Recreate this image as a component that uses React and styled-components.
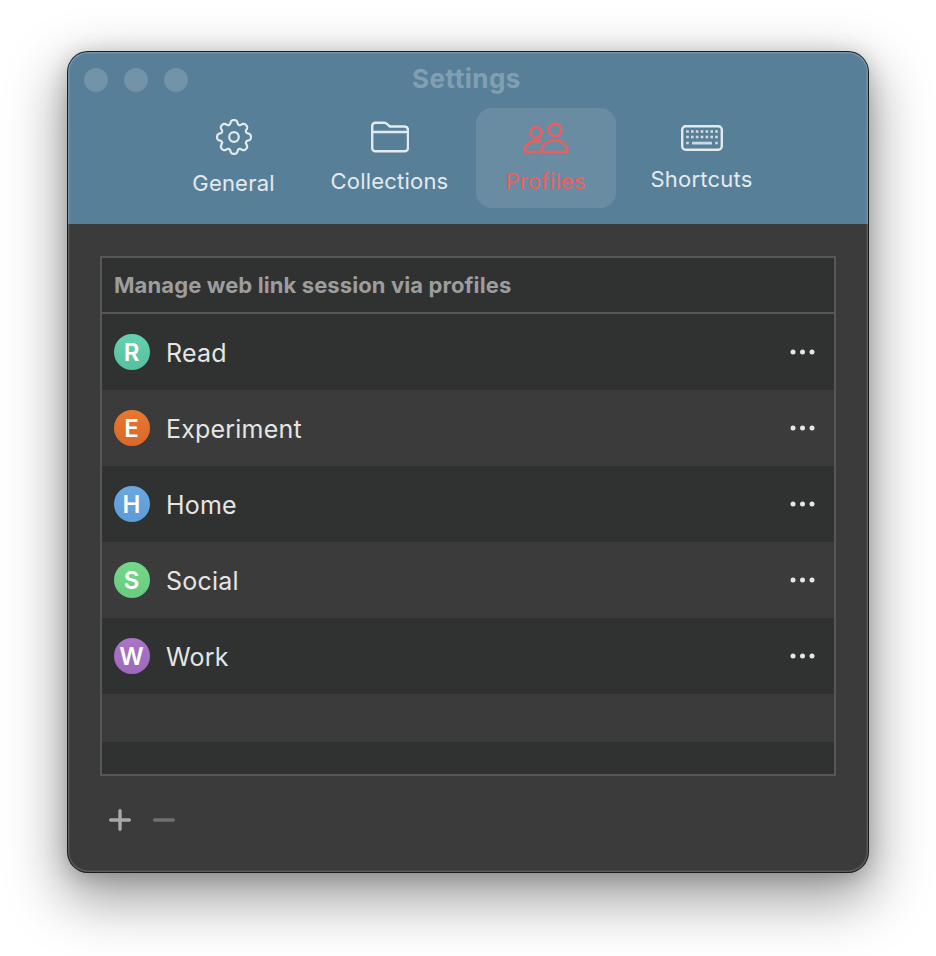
import React from "react";
import styled, { createGlobalStyle } from "styled-components";

const Global = createGlobalStyle`
  html, body { margin: 0; padding: 0; background: #ffffff; }
  body { font-family: Inter, "Liberation Sans", sans-serif; -webkit-font-smoothing: antialiased; }
`;

const Page = styled.div`
  width: 936px;
  height: 956px;
  padding: 52px 68px 84px;
  box-sizing: border-box;
  overflow: hidden;
`;

const Window = styled.div`
  width: 800px;
  height: 820px;
  border-radius: 20px;
  overflow: hidden;
  background: #3a3b3a;
  display: flex;
  flex-direction: column;
  box-shadow: 0 0 0 1px #1c1c1c, 0 22px 56px 6px rgba(0, 0, 0, 0.38), 0 4px 22px rgba(0, 0, 0, 0.22);
  position: relative;
  &::after {
    content: "";
    position: absolute;
    inset: 0;
    border-radius: 20px;
    box-shadow: inset 0 0 0 1.5px rgba(255, 255, 255, 0.16);
    pointer-events: none;
  }
`;

const Header = styled.header`
  height: 172px;
  background: #587f98;
  display: flex;
  flex-direction: column;
`;

const TitleBar = styled.div`
  height: 56px;
  padding: 0 16px;
  display: grid;
  grid-template-columns: 1fr auto 1fr;
  align-items: center;
`;

const Lights = styled.div`
  display: flex;
  gap: 16px;
`;

const Light = styled.span`
  width: 24px;
  height: 24px;
  border-radius: 50%;
  background: rgba(255, 255, 255, 0.16);
`;

const Title = styled.div`
  font-size: 26px;
  line-height: 54px;
  height: 56px;
  font-weight: 700;
  letter-spacing: 0.5px;
  margin-left: -3px;
  color: rgba(255, 255, 255, 0.27);
`;

const Tabs = styled.nav`
  display: flex;
  justify-content: center;
  gap: 16px;
`;

const Tab = styled.div`
  width: 140px;
  height: 100px;
  border-radius: 16px;
  display: flex;
  flex-direction: column;
  align-items: center;
  justify-content: center;
  gap: 14px;
  background: ${(p) => (p.$active ? "rgba(255,255,255,0.1)" : "transparent")};
  color: ${(p) => (p.$active ? "#ee5e5e" : "#e3eaee")};
`;

const TabIcon = styled.div`
  height: ${(p) => p.$h}px;
  display: flex;
  align-items: center;
  justify-content: center;
`;

const TabLabel = styled.div`
  font-size: 22px;
  line-height: 28px;
  font-weight: 400;
  letter-spacing: 0.2px;
  margin-left: -1px;
  white-space: nowrap;
`;

const Body = styled.main`
  flex: 1;
  padding: 32px 32px 0;
  display: flex;
  flex-direction: column;
`;

const Table = styled.section`
  height: 520px;
  box-sizing: border-box;
  border: 2px solid #565756;
  background: #303131;
  display: flex;
  flex-direction: column;
`;

const TableHead = styled.div`
  height: 54px;
  flex: none;
  border-bottom: 2px solid #565756;
  box-sizing: content-box;
  padding-left: 12px;
  display: flex;
  align-items: center;
  font-size: 22px;
  font-weight: 700;
  letter-spacing: 0.1px;
  color: #9c9d9c;
`;

const Row = styled.div`
  height: ${(p) => p.$h || 76}px;
  flex: none;
  box-sizing: border-box;
  padding: 0 18px 0 12px;
  display: flex;
  align-items: center;
  background: ${(p) => (p.$alt ? "#3a3b3a" : "#303131")};
`;

const Avatar = styled.div`
  width: 36px;
  height: 36px;
  border-radius: 50%;
  flex: none;
  box-sizing: border-box;
  padding-right: 1px;
  display: flex;
  align-items: center;
  justify-content: center;
  color: #fff;
  font-size: 24px;
  font-weight: 600;
  background: ${(p) => p.$color};
`;

const Name = styled.div`
  margin-left: 16px;
  flex: 1;
  font-size: 25px;
  line-height: 32px;
  padding-top: 2px;
  letter-spacing: 0.2px;
  font-weight: 400;
  color: #e4e5e4;
`;

const DotsWrap = styled.div`
  display: flex;
`;

const Footer = styled.div`
  display: flex;
  align-items: center;
  gap: 22px;
  padding: 33px 0 0 9px;
`;

const gearPath = (() => {
  const pts = [];
  const n = 240;
  for (let i = 0; i < n; i++) {
    const a = (i / n) * Math.PI * 2;
    const c = Math.cos(8 * a);
    const shape = Math.tanh(1.3 * (c + 0.35));
    const lo = Math.tanh(1.3 * -0.65);
    const hi = Math.tanh(1.3 * 1.35);
    const r = 13 + (3.9 * (shape - lo)) / (hi - lo);
    pts.push(`${(18 + r * Math.sin(a)).toFixed(2)} ${(18 - r * Math.cos(a)).toFixed(2)}`);
  }
  return `M${pts.join("L")}Z`;
})();

const Gear = () => (
  <svg width="36" height="36" viewBox="0 0 36 36" fill="none" stroke="currentColor" strokeWidth="2.200" strokeLinejoin="round">
    <path d={gearPath} />
    <circle cx="18" cy="18" r="4.800" />
  </svg>
);

const Folder = () => (
  <svg width="38" height="32" viewBox="0 0 38 32" fill="none" stroke="currentColor" strokeWidth="2.400" strokeLinejoin="round">
    <path d="M1.200 27V5a3.300 3.300 0 0 1 3.300-3.300h8.500c1.500 0 2.500.6 3.500 1.600L19 5.500h15a3.500 3.500 0 0 1 3 3.500v18a3.300 3.300 0 0 1-3.300 3.300H4.500A3.300 3.300 0 0 1 1.200 27z" />
    <path d="M1.200 11h35.600" />
  </svg>
);

const People = () => (
  <svg width="46" height="32" viewBox="0 0 46 32" fill="none" stroke="currentColor" strokeWidth="2.400">
    <circle cx="13" cy="11.500" r="5.400" />
    <circle cx="32" cy="9" r="6.200" />
    <path d="M15.500 31H3a1.700 1.700 0 0 1-1.700-2.200C3 23.500 7.500 20 13.500 20c1.200 0 2.400.2 3.500.5" strokeLinecap="round" />
    <path d="M19 31h24c1.400 0 2.100-1 1.700-2.200C42.800 23 37.800 19.500 31.500 19.500S20.200 23 18.300 28.800c-.4 1.200.3 2.200 1.700 2.200z" />
  </svg>
);

const Keyboard = () => (
  <svg width="42" height="28" viewBox="0 0 42 28" fill="none">
    <rect x="1.200" y="3.200" width="39.600" height="23.600" rx="3.500" stroke="currentColor" strokeWidth="2.400" />
    <g fill="currentColor" opacity="0.85">
      {[8.500, 14, 20].flatMap((y, r) =>
        [6.500, 11.300, 16.100, 21, 25.900, 30.700, 35.500].filter((x) => r !== 2 || x < 7 || x > 35).map((x) => (
          <rect key={`${r}-${x}`} x={x - 1.3} y={y - 1.3} width="2.600" height="2.600" />
        ))
      )}
      <rect x="11" y="18.700" width="20" height="2.800" rx="0.500" />
    </g>
  </svg>
);

const Dots = () => (
  <svg width="26" height="6" viewBox="0 0 26 6" fill="#e6e7e6">
    <circle cx="3" cy="3" r="2.500" />
    <circle cx="12.500" cy="3" r="2.500" />
    <circle cx="22" cy="3" r="2.500" />
  </svg>
);

const Plus = () => (
  <svg width="22" height="22" viewBox="0 0 22 22" stroke="#a8a9a8" strokeWidth="3.400" strokeLinecap="round">
    <path d="M1.700 11h18.600M11 1.700v18.600" />
  </svg>
);

const Minus = () => (
  <svg width="22" height="22" viewBox="0 0 22 22" stroke="#6f706f" strokeWidth="3.400" strokeLinecap="round">
    <path d="M1.700 11h18.600" />
  </svg>
);

const tabs = [
  { label: "General", icon: <Gear />, h: 36 },
  { label: "Collections", icon: <Folder />, h: 32 },
  { label: "Profiles", icon: <People />, h: 32, active: true },
  { label: "Shortcuts", icon: <Keyboard />, h: 28 },
];

const profiles = [
  { name: "Read", color: "linear-gradient(#66d2b0,#56c0a2)" },
  { name: "Experiment", color: "linear-gradient(#e8772f,#d9692c)" },
  { name: "Home", color: "linear-gradient(#69a8e2,#5c9bd5)" },
  { name: "Social", color: "linear-gradient(#74d88a,#68cb80)" },
  { name: "Work", color: "linear-gradient(#aa74c8,#9d69bc)" },
];

export default function App() {
  return (
    <Page>
      <Global />
      <Window>
        <Header>
          <TitleBar>
            <Lights>
              <Light />
              <Light />
              <Light />
            </Lights>
            <Title>Settings</Title>
            <div />
          </TitleBar>
          <Tabs>
            {tabs.map((t) => (
              <Tab key={t.label} $active={t.active}>
                <TabIcon $h={t.h}>{t.icon}</TabIcon>
                <TabLabel>{t.label}</TabLabel>
              </Tab>
            ))}
          </Tabs>
        </Header>
        <Body>
          <Table>
            <TableHead>Manage web link session via profiles</TableHead>
            {profiles.map((p, i) => (
              <Row key={p.name} $alt={i % 2 === 1}>
                <Avatar $color={p.color}>{p.name[0]}</Avatar>
                <Name>{p.name}</Name>
                <DotsWrap>
                  <Dots />
                </DotsWrap>
              </Row>
            ))}
            <Row $alt $h={48} />
          </Table>
          <Footer>
            <Plus />
            <Minus />
          </Footer>
        </Body>
      </Window>
    </Page>
  );
}
